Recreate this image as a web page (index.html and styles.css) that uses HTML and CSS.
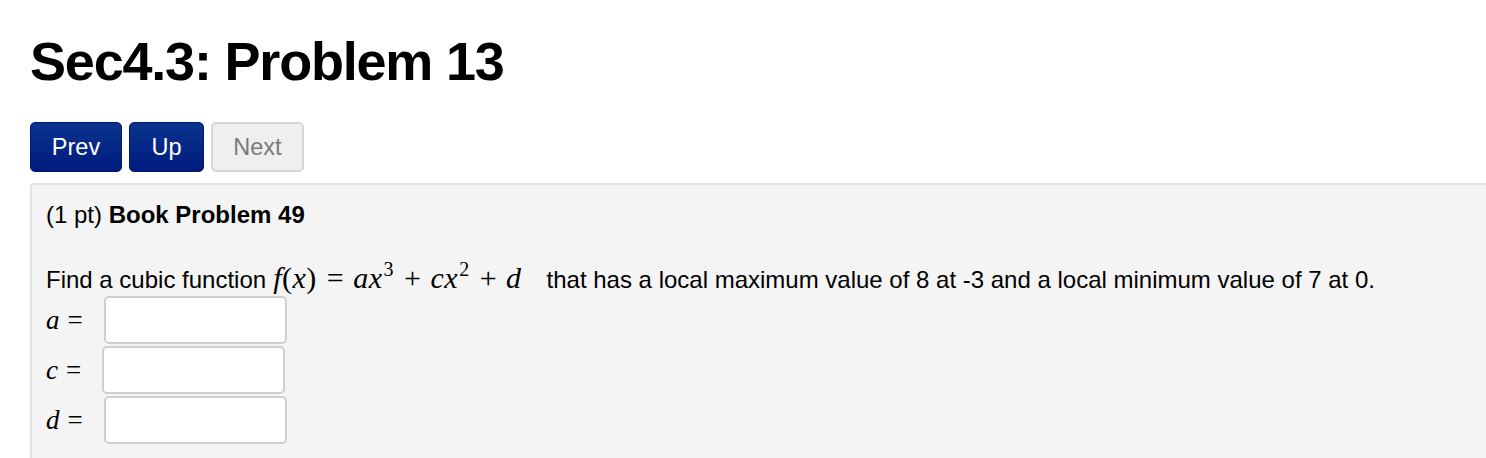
FILE: index.html
```html
<!DOCTYPE html>
<html>
<head>
<meta charset="utf-8">
<link rel="stylesheet" href="styles.css">
</head>
<body>
<h1 class="title">Sec4.3: Problem 13</h1>
<div class="nav">
  <a class="btn btn-primary btn-prev">Prev</a>
  <a class="btn btn-primary btn-up">Up</a>
  <a class="btn btn-disabled btn-next">Next</a>
</div>
<div class="panel">
  <p class="head">(1 pt) <b>Book Problem 49</b></p>
  <p class="question">Find a cubic function<span class="math eq"><i>f</i>(<i>x</i>)<span class="op">=</span><i>a</i><i>x</i><sup>3</sup><span class="op">+</span><i>c</i><i>x</i><sup>2</sup><span class="op">+</span><i>d</i></span>that has a local maximum value of 8 at -3 and a local minimum value of 7 at 0.</p>
  <div class="answers">
    <div class="row"><span class="math lbl"><i>a</i><span class="op">=</span></span><input class="ans" type="text"></div>
    <div class="row"><span class="math lbl lbl-c"><i>c</i><span class="op">=</span></span><input class="ans" type="text"></div>
    <div class="row"><span class="math lbl"><i>d</i><span class="op">=</span></span><input class="ans" type="text"></div>
  </div>
</div>
</body>
</html>
```
FILE: styles.css
```css
html, body {
  margin: 0;
  padding: 0;
  background: #fff;
  overflow: hidden;
}
body {
  font-family: "Liberation Sans", Arial, sans-serif;
  color: #000;
  padding-left: 30px;
  height: 458px;
}
.title {
  font-size: 54px;
  font-weight: bold;
  margin: 0;
  padding-top: 29px;
  line-height: 64px;
  letter-spacing: -1.2px;
}
.nav {
  display: flex;
  gap: 7px;
  margin-top: 29px;
}
.btn {
  display: flex;
  align-items: center;
  justify-content: center;
  height: 50px;
  box-sizing: border-box;
  border-radius: 5px;
  font-size: 23.5px;
}
.btn-prev { width: 92px; }
.btn-up { width: 75px; }
.btn-next { width: 93px; }
.btn-primary {
  background: linear-gradient(#0a338f, #001b7e);
  color: #fff;
  border: 1px solid #001a70;
}
.btn-disabled {
  background: #efefef;
  color: #7a7a7a;
  border: 2px solid #d6d6d6;
}
.panel {
  margin-top: 11px;
  background: #f4f4f4;
  border-top: 2px solid #e2e2e2;
  border-left: 2px solid #e2e2e2;
  border-top-left-radius: 4px;
  padding: 15px 0 0 14px;
  height: 258px;
  font-size: 24px;
}
.head {
  margin: 0;
  line-height: 30px;
}
.question {
  margin: 33px 0 0 0;
  line-height: 30px;
  white-space: nowrap;
}
.math {
  font-family: "Liberation Serif", "Times New Roman", serif;
  font-size: 27px;
  line-height: 30px;
}
.eq {
  font-size: 30px;
  margin-left: 7px;
  margin-right: 25px;
  letter-spacing: 0.5px;
}
.op {
  margin: 0 9px 0 10px;
}
.math sup {
  font-size: 20px;
  vertical-align: 12px;
  line-height: 0;
  margin-left: 1px;
}
.answers {
  margin-top: 1px;
  display: flex;
  flex-direction: column;
  gap: 2px;
}
.row {
  display: flex;
  align-items: center;
  height: 48px;
}
.lbl {
  width: 58px;
}
.lbl .op {
  margin: 0 0 0 8px;
}
.lbl-c {
  width: 56px;
}
.ans {
  width: 183px;
  height: 48px;
  box-sizing: border-box;
  border: 2px solid #cfcfcf;
  border-radius: 5px;
  background: #fff;
  margin: 0;
}
```
